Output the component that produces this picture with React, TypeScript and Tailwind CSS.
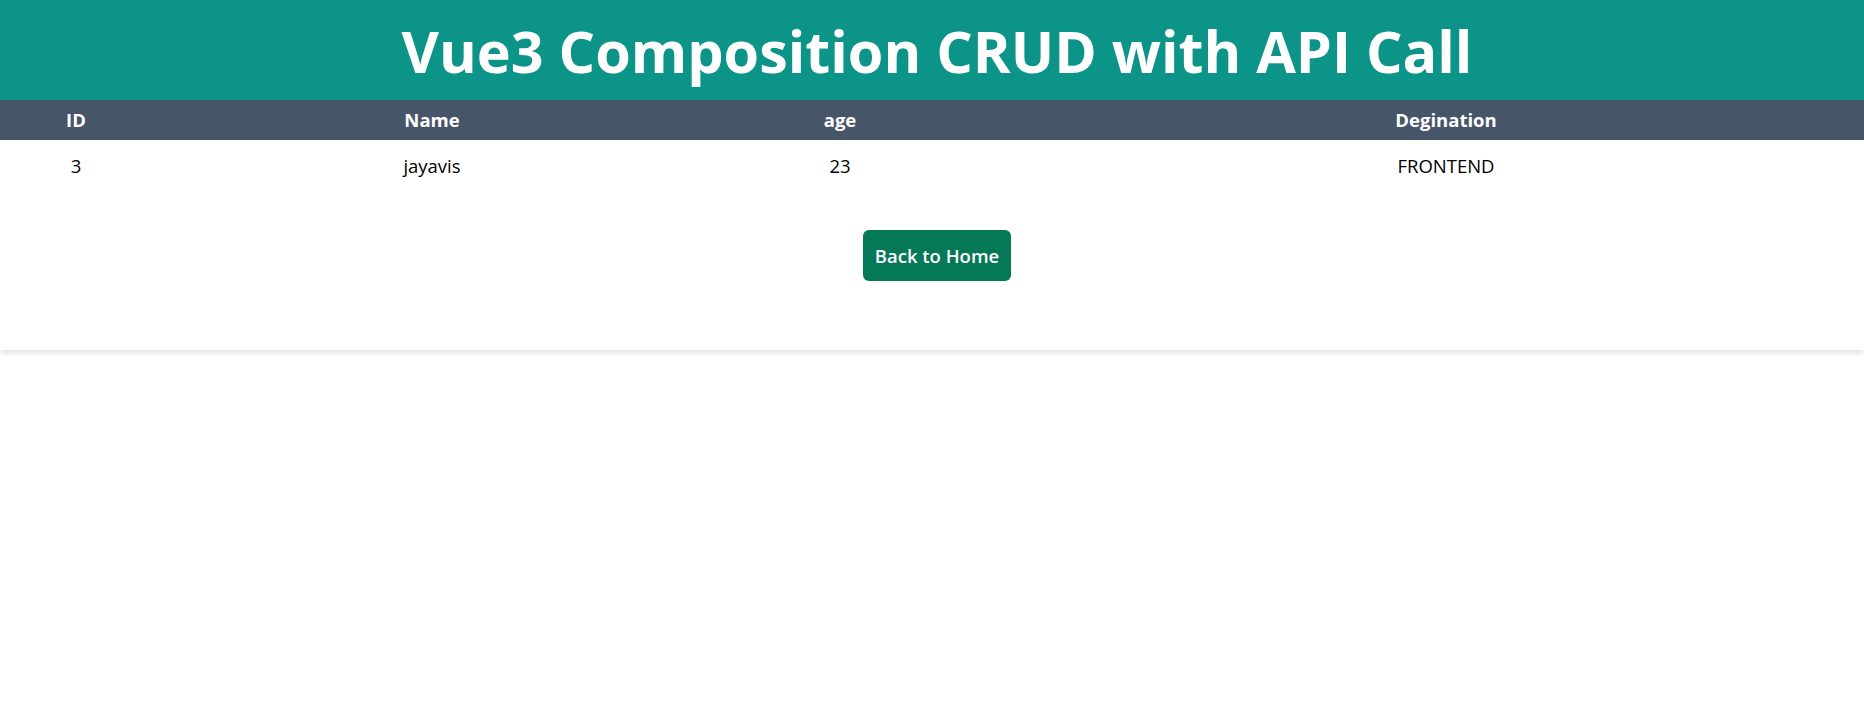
import React from 'react';

const rows = [{ id: 3, name: 'jayavis', age: 23, degination: 'FRONTEND' }];

const App: React.FC = () => {
  return (
    <div className="min-h-[717px] bg-white" style={{ fontFamily: '"Open Sans", "Noto Sans", sans-serif' }}>
      <div className="shadow-[0_3px_6px_rgba(0,0,0,0.12)]">
        <header className="h-[100px] bg-[#0d9488] flex items-center justify-center pl-[10px]">
          <h1 className="text-white font-bold text-[57.5px] leading-none pt-[4px]">
            Vue3 Composition CRUD with API Call
          </h1>
        </header>

        {/* Table */}
        <div className="grid grid-cols-[152px_560px_256px_1fr] h-[40px] bg-[#475569] text-white font-bold text-[18.5px] items-center">
          <div className="text-center">ID</div>
          <div className="text-center">Name</div>
          <div className="text-center">age</div>
          <div className="text-center pl-[60px]">Degination</div>
        </div>
        {rows.map((row) => (
          <div key={row.id} className="grid grid-cols-[152px_560px_256px_1fr] h-[52px] text-[18.5px] text-black items-center">
            <div className="text-center">{row.id}</div>
            <div className="text-center">{row.name}</div>
            <div className="text-center">{row.age}</div>
            <div className="text-center pl-[60px]">{row.degination}</div>
          </div>
        ))}

        <div className="flex justify-center pt-[38px] pb-[69px] pl-[10px]">
          <button className="h-[51px] w-[148px] rounded-md bg-[#047857] text-white font-semibold text-[18.5px]">
            Back to Home
          </button>
        </div>
      </div>
    </div>
  );
};

export default App;
